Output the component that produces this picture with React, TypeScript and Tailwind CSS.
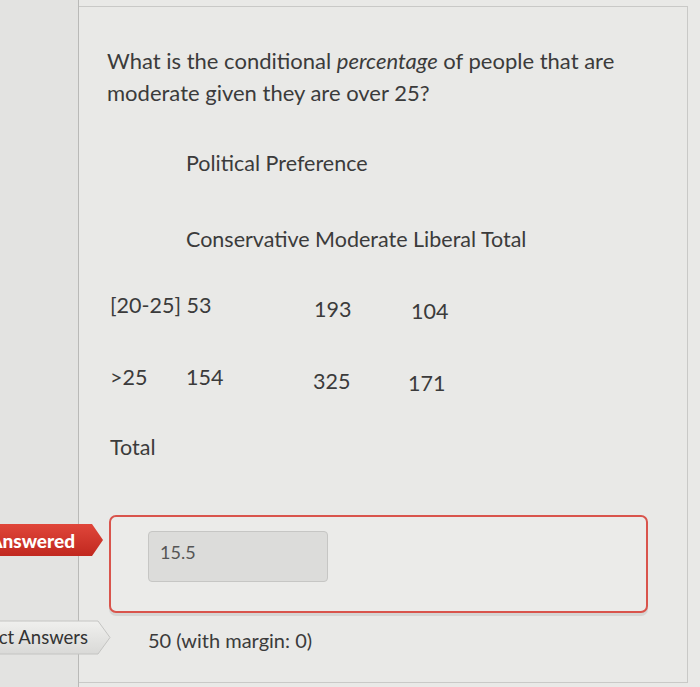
import React from "react";

export default function App() {
  const font = { fontFamily: "Lato, 'Open Sans', sans-serif" };
  return (
    <div
      className="relative w-[700px] h-[687px] overflow-hidden bg-[#e4e4e2] text-[#3b3b3b] flex"
      style={font}
    >
      <div className="w-[78px] shrink-0 bg-[#e3e3e1]" />
      <div className="relative flex-1 border-l border-[#b9b9b7] bg-[#e9e9e7]">
        <div className="mt-[6px] mr-[12px] h-[677px] border-t border-b border-r border-[#c9c9c7] pl-[28px] pt-[38px]">
          <p className="text-[22px] leading-[32px] w-[540px]">
            What is the conditional <em>percentage</em> of people that are
            moderate given they are over 25?
          </p>
          <p className="mt-[38px] ml-[79px] text-[21.5px] leading-[32px]">Political Preference</p>
          <p className="mt-[44px] ml-[79px] text-[21.5px] leading-[32px]">
            Conservative Moderate Liberal Total
          </p>
          <div className="mt-[34px] ml-[3px] flex text-[21.5px] leading-[32px]">
            <span className="w-[204px]">[20-25] 53</span>
            <span className="w-[97px] mt-[4px]">193</span>
            <span className="mt-[6px]">104</span>
          </div>
          <div className="mt-[34px] ml-[3px] flex text-[21.5px] leading-[32px]">
            <span className="w-[76px]">&gt;25</span>
            <span className="w-[127px]">154</span>
            <span className="w-[95px] mt-[4px]">325</span>
            <span className="mt-[6px]">171</span>
          </div>
          <p className="mt-[32px] ml-[3px] text-[21.5px] leading-[32px]">Total</p>

          <div className="relative mt-[52px] ml-[2px] w-[539px] h-[98px] rounded-[7px] border-2 border-[#d9544c] bg-[#ebebe9] pl-[37px] pt-[14px] shadow-[0_3px_0_#d6d6d4]">
            <div className="w-[180px] h-[51px] rounded-[4px] border border-[#c6c6c4] bg-[#dcdcda] pl-[11px] pt-[8px] text-[18px] leading-[24px] text-[#555]">
              15.5
            </div>
          </div>

          <p className="mt-[13px] ml-[41px] text-[20px] leading-[28px]">50 (with margin: 0)</p>
        </div>
      </div>

      {/* Answered badge */}
      <div className="absolute left-0 top-[524px] w-[104px] h-[32px]">
        <svg className="absolute inset-0" width="104" height="32" viewBox="0 0 104 32">
          <defs>
            <linearGradient id="rg" x1="0" y1="0" x2="0" y2="1">
              <stop offset="0" stopColor="#e0463a" />
              <stop offset="1" stopColor="#c1281f" />
            </linearGradient>
          </defs>
          <polygon points="0,0 92,0 103,16 92,32 0,32" fill="url(#rg)" />
        </svg>
        <div className="relative flex h-full items-center justify-end pr-[29px] text-[19px] font-black text-white leading-none">
          <span className="whitespace-nowrap">Answered</span>
        </div>
      </div>

      {/* Correct answers badge */}
      <div className="absolute left-0 top-[620px] w-[112px] h-[35px]">
        <svg className="absolute inset-0" width="112" height="35" viewBox="0 0 112 35">
          <defs>
            <linearGradient id="gg" x1="0" y1="0" x2="0" y2="1">
              <stop offset="0" stopColor="#f0f0ee" />
              <stop offset="1" stopColor="#d9d9d7" />
            </linearGradient>
          </defs>
          <polygon
            points="-2,1 98,1 110,17.5 98,34 -2,34"
            fill="url(#gg)"
            stroke="#c4c4c2"
            strokeWidth="1"
          />
        </svg>
        <div className="relative flex h-full items-center justify-end pr-[24px] text-[18.5px] text-[#333] leading-none">
          <span className="whitespace-nowrap">Correct Answers</span>
        </div>
      </div>
    </div>
  );
}
